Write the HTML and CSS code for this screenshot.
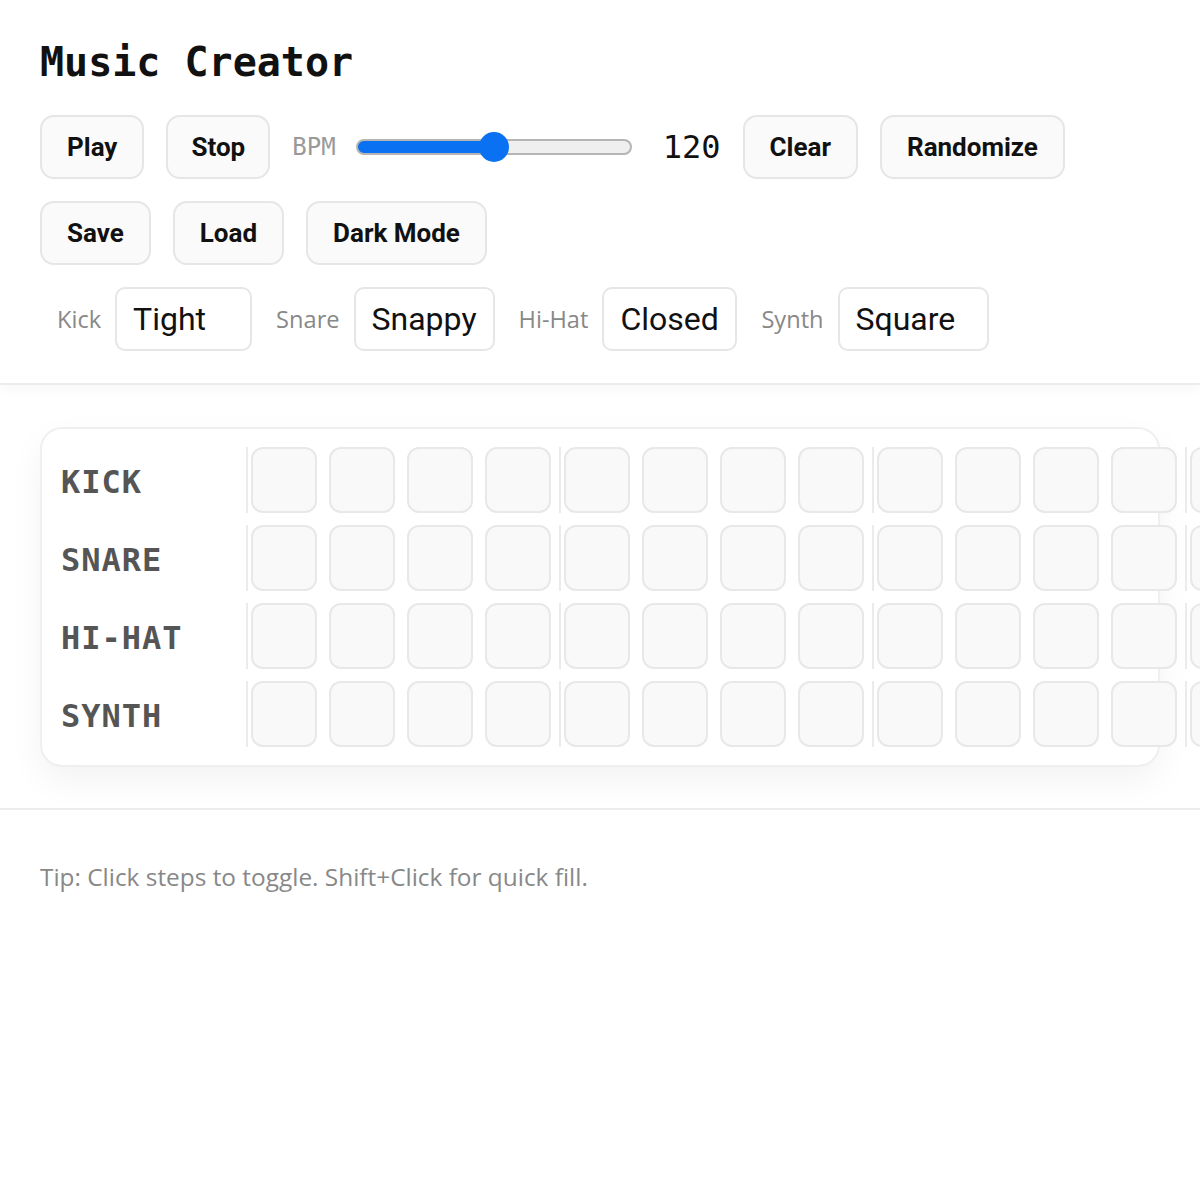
FILE: index.html
```html
<!DOCTYPE html>
<html>
<head>
  <title>Music Creator</title>
  <link rel="stylesheet" href="styles.css">
</head>
<body>
  <header class="topbar">
    <h1 class="title">Music Creator</h1>

    <div class="toolbar">
      <button class="btn" id="play">Play</button>
      <button class="btn" id="stop">Stop</button>
      <label class="bpm-label" for="bpm">BPM</label>
      <input type="range" class="bpm-slider" id="bpm" min="40" max="200" value="120">
      <output class="bpm-value" id="bpm-value">120</output>
      <button class="btn" id="clear">Clear</button>
      <button class="btn" id="randomize">Randomize</button>
      <button class="btn" id="save">Save</button>
      <button class="btn" id="load">Load</button>
      <button class="btn" id="theme">Dark Mode</button>
    </div>

    <div class="voices">
      <div class="voice">
        <label for="kick-sound">Kick</label>
        <select id="kick-sound">
          <option>Tight</option>
          <option>Thump</option>
          <option>Soft</option>
        </select>
      </div>
      <div class="voice">
        <label for="snare-sound">Snare</label>
        <select id="snare-sound">
          <option>Snappy</option>
          <option>Rim</option>
          <option>Fat</option>
        </select>
      </div>
      <div class="voice">
        <label for="hat-sound">Hi-Hat</label>
        <select id="hat-sound">
          <option>Closed</option>
          <option>Open</option>
          <option>Pedal</option>
        </select>
      </div>
      <div class="voice">
        <label for="synth-sound">Synth</label>
        <select id="synth-sound">
          <option>Square</option>
          <option>Sine</option>
          <option>Triangle</option>
          <option>Saw</option>
        </select>
      </div>
    </div>
  </header>

  <main class="stage">
    <div class="seq-card" id="grid"></div>
  </main>

  <footer class="tips">
    <p>Tip: Click steps to toggle. Shift+Click for quick fill.</p>
  </footer>

  <script>
    var tracks = ["KICK", "SNARE", "HI-HAT", "SYNTH"];
    var STEPS = 16;
    var grid = document.getElementById('grid');

    // one row per track, steps split into bars of 4
    tracks.forEach(function (name) {
      var row = document.createElement('div');
      row.className = 'seq-row';

      var label = document.createElement('div');
      label.className = 'seq-label';
      label.textContent = name;
      row.appendChild(label);

      var steps = document.createElement('div');
      steps.className = 'seq-steps';

      var bar;
      for (var i = 0; i < STEPS; i++) {
        if (i % 4 === 0) {
          bar = document.createElement('div');
          bar.className = 'seq-bar';
          steps.appendChild(bar);
        }
        var cell = document.createElement('button');
        cell.className = 'step';
        cell.addEventListener('click', function () {
          this.classList.toggle('on');
        });
        bar.appendChild(cell);
      }

      row.appendChild(steps);
      grid.appendChild(row);
    });

    // keep the slider fill and the number in sync
    var bpm = document.getElementById('bpm');
    var bpmValue = document.getElementById('bpm-value');

    function updateBpm() {
      var pct = (bpm.value - bpm.min) / (bpm.max - bpm.min) * 100;
      bpm.style.background = 'linear-gradient(to right, #0a71f2 ' + pct + '%, #efefef ' + pct + '%)';
      bpmValue.textContent = bpm.value;
    }

    bpm.addEventListener('input', updateBpm);
    updateBpm();
  </script>
</body>
</html>
```

FILE: styles.css
```css
html,
body {
  overflow-x: hidden;
}

body {
  margin: 0;
  background: #fff;
  color: #111;
  font-family: Roboto, "Liberation Sans", sans-serif;
}

/* top area: title, transport, sounds */
.topbar {
  position: relative;
  z-index: 1;
  padding: 38px 40px 32px;
  background: #fff;
  border-bottom: 2px solid #ececec;
  box-shadow: 0 4px 14px rgba(0, 0, 0, 0.035);
}

.title {
  margin: 0 0 29px;
  font-family: "DejaVu Sans Mono", "Liberation Mono", monospace;
  font-size: 40px;
  line-height: 48px;
  font-weight: bold;
  color: #111;
}

.toolbar {
  display: flex;
  flex-wrap: wrap;
  align-items: center;
  gap: 22px;
}

.btn {
  padding: 15px 25px;
  font-family: Roboto, "Liberation Sans", sans-serif;
  font-size: 26px;
  line-height: 30px;
  font-weight: bold;
  color: #111;
  background: #fafafa;
  border: 2px solid #e6e6e6;
  border-radius: 14px;
  cursor: pointer;
}

#stop {
  padding: 15px 23px;
}

.bpm-label {
  font-family: "DejaVu Sans Mono", "Liberation Mono", monospace;
  font-size: 24px;
  color: #999;
}

.bpm-slider {
  -webkit-appearance: none;
  appearance: none;
  box-sizing: border-box;
  width: 276px;
  height: 16px;
  margin: 0 0 0 -2px;
  border: 2px solid #b5b5b5;
  border-radius: 8px;
  background: #efefef;
}

.bpm-slider::-webkit-slider-thumb {
  -webkit-appearance: none;
  width: 30px;
  height: 30px;
  border: none;
  border-radius: 50%;
  background: #0a71f2;
  cursor: pointer;
}

.bpm-value {
  width: 67px;
  text-align: right;
  font-family: "DejaVu Sans Mono", "Liberation Mono", monospace;
  font-size: 32px;
  color: #111;
}

.voices {
  display: flex;
  gap: 7px;
  margin-top: 22px;
}

.voice {
  display: flex;
  align-items: center;
  gap: 14px;
}

.voice label {
  margin-left: 17px;
  font-family: "Open Sans", "Noto Sans", sans-serif;
  font-size: 23.6px;
  color: #888;
}

.voice select {
  -webkit-appearance: none;
  appearance: none;
  height: 64px;
  padding: 0 16px;
  font-family: Roboto, "Liberation Sans", sans-serif;
  font-size: 32px;
  color: #111;
  background: #fff;
  border: 2px solid #e6e6e6;
  border-radius: 10px;
}

/* sequencer */
.stage {
  padding: 42px 40px 41px;
  border-bottom: 2px solid #ededed;
}

.seq-card {
  display: flex;
  flex-direction: column;
  gap: 12px;
  padding: 18px 19px;
  background: #fff;
  border: 2px solid #efefef;
  border-radius: 22px;
  box-shadow: 0 14px 34px rgba(0, 0, 0, 0.05);
}

.seq-row {
  display: flex;
  align-items: center;
}

.seq-label {
  flex: 0 0 185px;
  padding-top: 3px;
  font-family: "DejaVu Sans Mono", "Liberation Mono", monospace;
  font-size: 32px;
  font-weight: bold;
  letter-spacing: 1px;
  color: #555;
}

.seq-steps {
  display: flex;
  gap: 8px;
}

.seq-bar {
  display: flex;
  gap: 12px;
  padding-left: 3px;
  border-left: 2px solid #ebebeb;
}

.step {
  flex: 0 0 66px;
  width: 66px;
  height: 66px;
  padding: 0;
  background: #f9f9f9;
  border: 2px solid #e8e8e8;
  border-radius: 12px;
  cursor: pointer;
}

.step.on {
  background: #0a71f2;
  border-color: #0a71f2;
}

.tips {
  padding: 51px 40px 52px;
}

.tips p {
  margin: 0;
  font-family: "Open Sans", "Noto Sans", sans-serif;
  font-size: 24.4px;
  line-height: 32px;
  color: #888;
}
```
